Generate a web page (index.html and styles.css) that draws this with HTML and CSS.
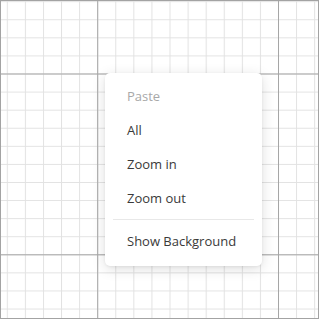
FILE: index.html
```html
<!DOCTYPE html>
<html>
<head>
<meta charset="utf-8">
<link rel="stylesheet" href="styles.css">
</head>
<body>
<div class="stage">
  <svg class="grid" width="319" height="319" viewBox="0 0 319 319" xmlns="http://www.w3.org/2000/svg">
    <defs>
      <pattern id="minor" patternUnits="userSpaceOnUse" x="6.8" y="1.2" width="18.08" height="18.08">
        <path d="M0.5 0 V18.08 M0 0.5 H18.08" stroke="#e2e2e2" stroke-width="1" fill="none"/>
      </pattern>
      <pattern id="major" patternUnits="userSpaceOnUse" x="97.2" y="73.5" width="180.8" height="180.8">
        <path d="M0.5 0 V180.8 M0 0.5 H180.8" stroke="#a6a6a6" stroke-width="1" fill="none"/>
      </pattern>
    </defs>
    <rect width="319" height="319" fill="#ffffff"/>
    <rect width="319" height="319" fill="url(#minor)"/>
    <rect width="319" height="319" fill="url(#major)"/>
    <rect x="0.5" y="0.5" width="318" height="318" fill="none" stroke="#a3a3a3"/>
  </svg>
  <div class="menu">
    <div class="item disabled">Paste</div>
    <div class="item">All</div>
    <div class="item">Zoom in</div>
    <div class="item">Zoom out</div>
    <div class="sep"></div>
    <div class="item">Show Background</div>
  </div>
</div>
</body>
</html>
```

FILE: styles.css
```css
html, body {
  margin: 0;
  padding: 0;
  background: #fff;
}
.stage {
  position: relative;
  width: 319px;
  height: 319px;
  overflow: hidden;
  font-family: "Open Sans", "Noto Sans", sans-serif;
}
.grid {
  position: absolute;
  left: 0;
  top: 0;
  display: block;
}
.menu {
  position: absolute;
  left: 105px;
  top: 73px;
  width: 157px;
  box-sizing: border-box;
  padding: 6px 0 8px;
  background: #fff;
  border-radius: 5px;
  box-shadow: 0 3px 14px rgba(0, 0, 0, 0.13), 0 1px 3px rgba(0, 0, 0, 0.06);
  display: flex;
  flex-direction: column;
}
.item {
  height: 34px;
  line-height: 34px;
  padding-left: 22px;
  font-size: 13px;
  color: #3a3a3a;
  white-space: nowrap;
}
.item.disabled {
  color: #a8a8a8;
}
.sep {
  height: 1px;
  margin: 4px 8px;
  background: #e8e8e8;
}
```
